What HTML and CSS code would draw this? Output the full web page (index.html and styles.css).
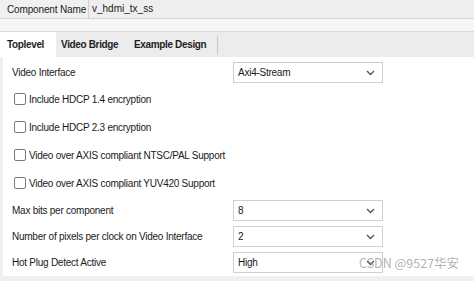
FILE: index.html
```html
<!DOCTYPE html>
<html>
<head>
<meta charset="utf-8">
<link rel="stylesheet" href="styles.css">
</head>
<body>
<div class="top">
  <span class="cn-label">Component Name</span>
  <div class="cn-field">v_hdmi_tx_ss</div>
</div>
<div class="band"></div>
<div class="tabs">
  <div class="tab active">Toplevel</div>
  <div class="tab second">Video Bridge</div>
  <div class="tab last">Example Design</div>
</div>
<div class="panel">
  <div class="row first">
    <span class="lbl">Video Interface</span>
    <div class="select"><span>Axi4-Stream</span><svg class="chev" width="9" height="6" viewBox="0 0 9 6"><path d="M1 1 L4.5 4.5 L8 1" fill="none" stroke="#555" stroke-width="1.4"/></svg></div>
  </div>
  <label class="check"><span class="box"></span>Include HDCP 1.4 encryption</label>
  <label class="check"><span class="box"></span>Include HDCP 2.3 encryption</label>
  <label class="check"><span class="box"></span>Video over AXIS compliant NTSC/PAL Support</label>
  <label class="check"><span class="box"></span>Video over AXIS compliant YUV420 Support</label>
  <div class="row after-checks">
    <span class="lbl">Max bits per component</span>
    <div class="select"><span>8</span><svg class="chev" width="9" height="6" viewBox="0 0 9 6"><path d="M1 1 L4.5 4.5 L8 1" fill="none" stroke="#555" stroke-width="1.4"/></svg></div>
  </div>
  <div class="row">
    <span class="lbl">Number of pixels per clock on Video Interface</span>
    <div class="select"><span>2</span><svg class="chev" width="9" height="6" viewBox="0 0 9 6"><path d="M1 1 L4.5 4.5 L8 1" fill="none" stroke="#555" stroke-width="1.4"/></svg></div>
  </div>
  <div class="row">
    <span class="lbl">Hot Plug Detect Active</span>
    <div class="select"><span>High</span><svg class="chev" width="9" height="6" viewBox="0 0 9 6"><path d="M1 1 L4.5 4.5 L8 1" fill="none" stroke="#555" stroke-width="1.4"/></svg></div>
  </div>
  <div class="watermark">CSDN @9527华安</div>
</div>
</body>
</html>
```
FILE: styles.css
```css
* { box-sizing: border-box; }
html, body {
  margin: 0;
  padding: 0;
  width: 474px;
  height: 281px;
  overflow: hidden;
  background: #f0f0f0;
  font-family: "Liberation Sans", Arial, sans-serif;
  font-size: 10px;
  color: #1a1a1a;
  white-space: nowrap;
}
.top {
  display: flex;
  align-items: center;
  height: 19px;
  border-bottom: 1px solid #d6d6d6;
  background: #f0f0f0;
}
.cn-label {
  padding-left: 7px;
  width: 88px;
  flex: none;
  letter-spacing: -0.15px;
}
.cn-field {
  flex: 1;
  height: 18px;
  margin-right: 2px;
  border-left: 1px solid #d0d0d0;
  background: #eeeeee;
  padding-left: 3px;
  line-height: 17px;
}
.band {
  height: 13px;
  background: #f6f6f6;
  border-bottom: 1px solid #dcdcdc;
}
.tabs {
  display: flex;
  height: 25px;
  background: #ececec;
  align-items: stretch;
}
.tab {
  font-weight: bold;
  line-height: 25px;
  color: #1e1e1e;
  flex: none;
  letter-spacing: -0.35px;
}
.tab.active {
  background: #ffffff;
  width: 56px;
  padding-left: 7px;
}
.tab.second {
  width: 72px;
  padding-left: 5px;
}
.tab.last {
  position: relative;
  width: 90px;
  padding-left: 6px;
}
.tab.last::after {
  content: "";
  position: absolute;
  right: 0;
  top: 4px;
  bottom: 2px;
  width: 1px;
  background: #c8c8c8;
}
.panel {
  position: relative;
  margin-left: 3px;
  height: 219px;
  background: #ffffff;
  padding-top: 5px;
  letter-spacing: -0.25px;
}
.row {
  display: flex;
  align-items: center;
  height: 21px;
  margin-bottom: 5px;
}
.row.first { margin-bottom: 2px; }
.row.after-checks { margin-top: 3px; }
.lbl {
  width: 230px;
  padding-left: 9px;
  flex: none;
}
.select {
  width: 150px;
  height: 21px;
  border: 1px solid #cfcfcf;
  background: #fff;
  display: flex;
  align-items: center;
  justify-content: space-between;
  padding: 0 7px 0 4px;
}
.chev { display: block; }
.check {
  display: flex;
  align-items: center;
  height: 28px;
  padding-left: 11px;
}
.box {
  width: 12px;
  height: 12px;
  border: 1px solid #7a7a7a;
  border-radius: 2px;
  margin-right: 3px;
  background: #fff;
}
.watermark {
  position: absolute;
  left: 356px;
  top: 196px;
  font-family: "Noto Sans CJK SC", "Liberation Sans", sans-serif;
  font-size: 12.5px;
  letter-spacing: 0;
  color: rgba(150,150,150,0.75);
}
```
